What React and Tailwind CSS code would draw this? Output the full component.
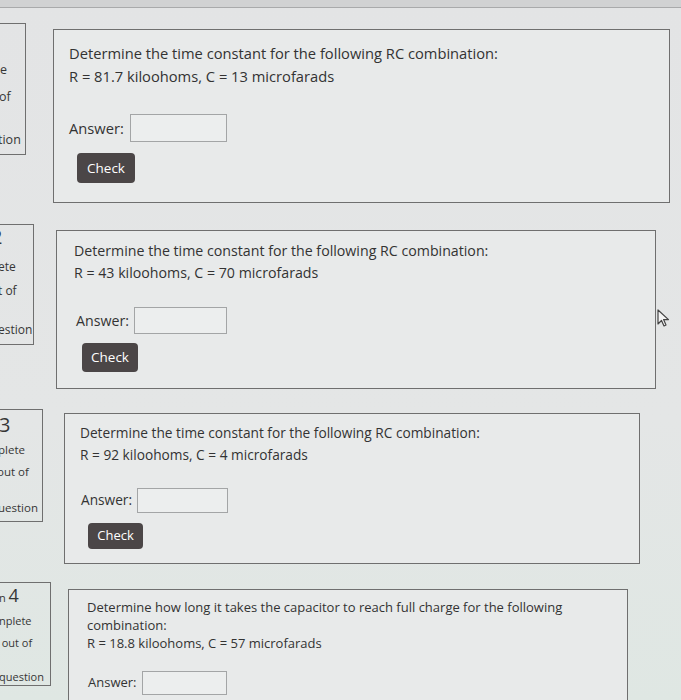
import React from "react";

const questions = [
  {
    row: "mt-[15px]",
    info: "w-[26px] h-[132px] text-[12.5px]",
    infoLines: [
      { t: "e", c: "mt-[36px]" },
      { t: "of", c: "mt-[7px] -ml-[1px]" },
      { t: "tion", c: "mt-[23px] -ml-[2px]" },
    ],
    box: "mt-[6px] ml-[27px] w-[617px] h-[174px] pt-[12px] pl-[15px]",
    text: "text-[14.7px] leading-[23px]",
    lines: [
      "Determine the time constant for the following RC combination:",
      "R = 81.7 kiloohoms, C = 13 microfarads",
    ],
    answer: "mt-[26px] gap-[6px] text-[14.7px]",
    input: "w-[97px] h-[28px]",
    check: "mt-[11px] ml-[8px] w-[58px] h-[30px] text-[13.5px]",
  },
  {
    row: "mt-[21px]",
    info: "w-[34px] h-[121px] text-[12px]",
    infoLines: [
      { t: "2", c: "-ml-[9px] text-[20px] leading-[24px]" },
      { t: "ete", c: "mt-[8px] -ml-[2px]" },
      { t: "t of", c: "mt-[4px] -ml-[2px]" },
      { t: "estion", c: "mt-[19px] -ml-[2px]" },
    ],
    box: "mt-[6px] ml-[22px] w-[600px] h-[159px] pt-[9px] pl-[17px]",
    text: "text-[14.2px] leading-[22px]",
    lines: [
      "Determine the time constant for the following RC combination:",
      "R = 43 kiloohoms, C = 70 microfarads",
    ],
    answer: "mt-[23px] ml-[2px] gap-[5px] text-[14.2px]",
    input: "w-[93px] h-[27px]",
    check: "mt-[9px] ml-[8px] w-[56px] h-[29px] text-[13.5px]",
  },
  {
    row: "mt-[20px]",
    info: "w-[43px] h-[113px] text-[11.5px]",
    infoLines: [
      { t: "3", c: "mt-[3px] -ml-[1px] text-[20px] leading-[24px]" },
      { t: "plete", c: "mt-[3px] -ml-[2px]" },
      { t: "out of", c: "mt-[2px] -ml-[3px]" },
      { t: "uestion", c: "mt-[16px] -ml-[2px]" },
    ],
    box: "mt-[4px] ml-[21px] w-[576px] h-[151px] pt-[8px] pl-[15px]",
    text: "text-[13.7px] leading-[22px]",
    lines: [
      "Determine the time constant for the following RC combination:",
      "R = 92 kiloohoms, C = 4 microfarads",
    ],
    answer: "mt-[22px] ml-[1px] gap-[5px] text-[13.7px]",
    input: "w-[91px] h-[25px]",
    check: "mt-[10px] ml-[8px] w-[55px] h-[26px] text-[13px]",
  },
  {
    row: "mt-[18px]",
    info: "w-[51px] h-[104px] text-[11px]",
    infoLines: [
      { t: "n 4", c: "-ml-[1px] leading-[24px]", big: true },
      { t: "nplete", c: "mt-[1px] -ml-[1px]" },
      { t: "l out of", c: "mt-[2px] -ml-[4px]" },
      { t: "question", c: "mt-[14px] -ml-[1px]" },
    ],
    box: "mt-[7px] ml-[17px] w-[560px] h-[140px] pt-[8px] pl-[18px]",
    text: "text-[13px] leading-[18px]",
    lines: [
      "Determine how long it takes the capacitor to reach full charge for the following",
      "combination:",
      "R = 18.8 kiloohoms, C = 57 microfarads",
    ],
    answer: "mt-[19px] ml-[1px] gap-[5px] text-[13px]",
    input: "w-[85px] h-[24px]",
  },
];

function InfoBox({ q }) {
  return (
    <div
      className={`${q.info} shrink-0 overflow-hidden border-y border-r border-[#6f6f6f] leading-[20px] text-[#363636]`}
    >
      {q.infoLines.map((l, i) => (
        <div key={i} className={`whitespace-nowrap ${l.c}`}>
          {l.big ? (
            <>
              {l.t.slice(0, -1)}
              <span className="text-[18px]">{l.t.slice(-1)}</span>
            </>
          ) : (
            l.t
          )}
        </div>
      ))}
    </div>
  );
}

function QuestionBox({ q }) {
  return (
    <div
      className={`${q.box} shrink-0 border border-[#6f6f6f] bg-[#e8eaea] text-[#333333]`}
    >
      <div className={q.text}>
        {q.lines.map((l, i) => (
          <div key={i} className="whitespace-nowrap">
            {l}
          </div>
        ))}
      </div>
      <div className={`flex items-center ${q.answer}`}>
        <span>Answer:</span>
        <div className={`${q.input} border border-[#a3a5a6] bg-[#eceeee]`} />
      </div>
      {q.check && (
        <div
          className={`${q.check} flex items-center justify-center rounded-[4px] bg-[#4b4647] text-white`}
        >
          Check
        </div>
      )}
    </div>
  );
}

const App = () => {
  return (
    <div
      className="relative h-[700px] w-[681px] overflow-hidden bg-[linear-gradient(180deg,#e3e4e5_0%,#e4e6e6_60%,#dfe7e3_100%)]"
      style={{ fontFamily: '"Open Sans", "Noto Sans", sans-serif' }}
    >
      <div className="h-[8px] border-b border-[#a9aaab] bg-[#d1d2d3]" />
      {questions.map((q, i) => (
        <div key={i} className={`flex items-start ${q.row}`}>
          <InfoBox q={q} />
          <QuestionBox q={q} />
        </div>
      ))}
      <svg
        className="absolute left-[657px] top-[309px]"
        width="14"
        height="19"
        viewBox="0 0 14 19"
      >
        <path
          d="M1 1 L1 15 L4.5 11.5 L7 17 L9 16 L6.6 10.6 L11.5 10.6 Z"
          fill="#f4f4f4"
          stroke="#444"
          strokeWidth="1.2"
          strokeLinejoin="round"
        />
      </svg>
    </div>
  );
};

export default App;
